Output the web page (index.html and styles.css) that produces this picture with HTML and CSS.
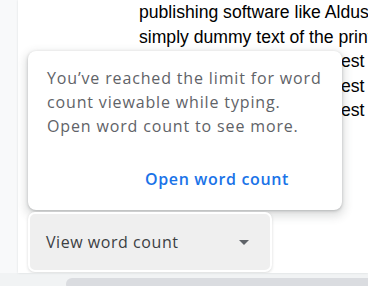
FILE: index.html
```html
<!DOCTYPE html>
<html>
<head>
<meta charset="utf-8">
<link rel="stylesheet" href="styles.css">
</head>
<body>
<div class="page">
  <div class="doc">
    <div class="doc-line">publishing software like Aldus</div>
    <div class="doc-line">simply dummy text of the print</div>
    <div class="doc-line tail">est</div>
    <div class="doc-line tail">est</div>
    <div class="doc-line tail">est</div>
  </div>
  <div class="popup">
    <p class="popup-text">You’ve reached the limit for word count viewable while typing.<br>Open word count to see more.</p>
    <div class="popup-actions">
      <button class="link-btn">Open word count</button>
    </div>
  </div>
  <div class="wc-toggle">
    <span class="wc-label">View word count</span>
    <svg class="wc-arrow" width="10" height="5" viewBox="0 0 10 5"><path d="M0 0l5 5 5-5z" fill="#5f6368"/></svg>
  </div>
</div>
<div class="scroll">
  <div class="thumb"></div>
</div>
</body>
</html>
```
FILE: styles.css
```css
html, body {
  margin: 0;
  padding: 0;
}
body {
  width: 368px;
  height: 286px;
  overflow: hidden;
  background: #f8f9fa;
  display: flex;
  flex-direction: column;
}
.page {
  position: relative;
  margin-left: 18px;
  height: 273px;
  background: #fff;
  box-shadow: 0 0 2px rgba(60, 64, 67, 0.15);
  flex: none;
  overflow: hidden;
}
.doc {
  padding-left: 121px;
  font-family: "Liberation Sans", Arial, sans-serif;
  font-size: 17.6px;
  line-height: 24.5px;
  color: #000;
  white-space: nowrap;
}
.doc-line.tail {
  padding-left: 202px;
}
.popup {
  position: absolute;
  left: 10px;
  top: 51px;
  width: 314px;
  height: 159px;
  box-sizing: border-box;
  background: #fff;
  border-radius: 8px;
  box-shadow: 0 1px 3px rgba(60, 64, 67, 0.3), 0 4px 8px 3px rgba(60, 64, 67, 0.15);
  padding: 15px 6px 0 19px;
  font-family: "Open Sans", sans-serif;
}
.popup-text {
  margin: 0;
  font-size: 16px;
  line-height: 24px;
  letter-spacing: 0.85px;
  color: #5f6368;
}
.popup-actions {
  display: flex;
  justify-content: flex-end;
  padding-top: 29px;
  padding-right: 47px;
}
.link-btn {
  border: 0;
  background: none;
  padding: 0;
  font-family: "Open Sans", sans-serif;
  font-size: 16px;
  font-weight: 600;
  line-height: 24px;
  letter-spacing: 0.65px;
  color: #1a73e8;
}
.wc-toggle {
  position: absolute;
  left: 10px;
  top: 212px;
  width: 244px;
  height: 60px;
  box-sizing: border-box;
  border: 2px solid #fff;
  border-radius: 7px;
  background: #efefef;
  box-shadow: 0 1px 3px rgba(60, 64, 67, 0.2);
  display: flex;
  align-items: center;
  padding: 0 21px 0 16px;
  font-family: "Open Sans", sans-serif;
}
.wc-label {
  flex: 1;
  font-size: 16px;
  letter-spacing: 0.55px;
  color: #3c4043;
}
.wc-arrow {
  display: block;
}
.scroll {
  flex: none;
  height: 13px;
  background: #f1f3f4;
  padding: 5px 0 0 66px;
  box-sizing: border-box;
}
.thumb {
  height: 12px;
  background: #dadce0;
  border-radius: 6px 0 0 6px;
}
```
